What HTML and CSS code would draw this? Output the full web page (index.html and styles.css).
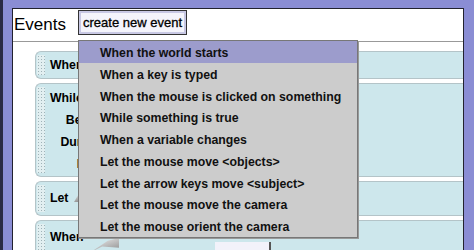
FILE: index.html
```html
<!DOCTYPE html>
<html lang="en">
<head>
    <meta charset="UTF-8">
    <title>Events</title>
    <link rel="stylesheet" href="styles.css">
</head>
<body>
    <div class="edge"></div>
    <div class="panel">
        <div class="header">
            <span class="title">Events</span>
            <button class="create">create new event</button>
        </div>

        <div class="events">
            <div class="block b1">
                <div class="grip"></div>
                <div class="label">When</div>
            </div>
            <div class="block b2">
                <div class="grip"></div>
                <div class="rows">
                    <div class="label">While</div>
                    <div class="sub">Begin</div>
                    <div class="sub">During</div>
                    <div class="sub">End</div>
                </div>
            </div>
            <div class="block b3">
                <div class="grip"></div>
                <div class="label">Let</div>
                <div class="cursor c1"></div>
            </div>
            <div class="block b4">
                <div class="grip"></div>
                <div class="label">When</div>
                <div class="cursor c2"></div>
                <div class="field"></div>
            </div>
        </div>

        <ul class="menu">
            <li class="active">When the world starts</li>
            <li>When a key is typed</li>
            <li>When the mouse is clicked on something</li>
            <li>While something is true</li>
            <li>When a variable changes</li>
            <li>Let the mouse move &lt;objects&gt;</li>
            <li>Let the arrow keys move &lt;subject&gt;</li>
            <li>Let the mouse move the camera</li>
            <li>Let the mouse orient the camera</li>
        </ul>
    </div>
</body>
</html>
```

FILE: styles.css
```css
body {
    margin: 0;
    height: 250px;
    overflow: hidden;
    background: #8a8dd4;
    font-family: "Liberation Sans", Arial, sans-serif;
    display: flex;
}
.edge {
    width: 3px;
    background: #2a2a44;
}
.panel {
    position: relative;
    margin: 8px 0 0 9px;
    width: 450px;
    background: white;
    border: 1px solid #22222e;
    border-bottom: none;
}
.header {
    height: 32px;
    display: flex;
    align-items: center;
    border-bottom: 1px solid #999;
}
.title {
    font-size: 17px;
    margin-left: 1px;
    width: 64px;
}
.create {
    align-self: flex-start;
    margin-top: 1px;
    height: 25px;
    padding: 0 4px;
    font-family: "Liberation Sans", Arial, sans-serif;
    font-size: 13px;
    color: black;
    background: #f4f4fb;
    border: 1px solid #333;
    box-shadow: inset 0 0 0 2px #c8c8e4;
    -webkit-text-stroke: 0.3px black;
}
.events {
    padding: 9px 0 0 22px;
    display: flex;
    flex-direction: column;
    gap: 4px;
}
.block {
    position: relative;
    display: flex;
    background: #cde7ec;
    border: 1px solid #b4c4c8;
    border-right: none;
    border-radius: 6px 0 0 6px;
}
.grip {
    width: 8px;
    margin: 3px 5px 3px 1px;
    background-color: #e2eff1;
    background-image: radial-gradient(circle, #9fb3b8 0.6px, transparent 0.9px);
    background-size: 3px 3px;
}
.label {
    font-size: 12.3px;
    font-weight: bold;
    line-height: 22px;
}
.b1 { height: 26px; }
.b1 .label { padding-top: 2px; }
.b2 { height: 92px; }
.b2 .label { padding-top: 3px; }
.rows {
    display: flex;
    flex-direction: column;
}
.sub {
    font-size: 12.3px;
    font-weight: bold;
    line-height: 22px;
    width: 50px;
    text-align: right;
}
.b3 { height: 33px; }
.b3 .label { padding-top: 5px; }
.b4 { height: 40px; }
.b4 .label { padding-top: 5px; }
.cursor {
    position: absolute;
    background: linear-gradient(160deg, #f4f4f4, #8c8c8c);
}
.c1 {
    left: 38px;
    top: 10px;
    width: 6px;
    height: 10px;
    clip-path: polygon(0 100%, 100% 0, 100% 100%);
}
.c2 {
    left: 55px;
    top: 17px;
    width: 28px;
    height: 14px;
    clip-path: polygon(0 100%, 60% 20%, 100% 0, 100% 70%, 40% 60%);
}
.field {
    position: absolute;
    left: 179px;
    top: 21px;
    width: 54px;
    height: 8px;
    background: #f2f2fa;
    border-right: 2px solid #555;
}
.menu {
    position: absolute;
    left: 65px;
    top: 31px;
    width: 278px;
    margin: 0;
    padding: 0;
    list-style: none;
    background: #cccccc;
    border: 1px solid #777;
    box-shadow: 1px 1px 0 #999;
}
.menu li {
    height: 21.75px;
    line-height: 25px;
    padding-left: 21px;
    font-size: 12.3px;
    font-weight: bold;
    color: #111;
}
.menu li.active {
    background: #9c9ccc;
}
```
